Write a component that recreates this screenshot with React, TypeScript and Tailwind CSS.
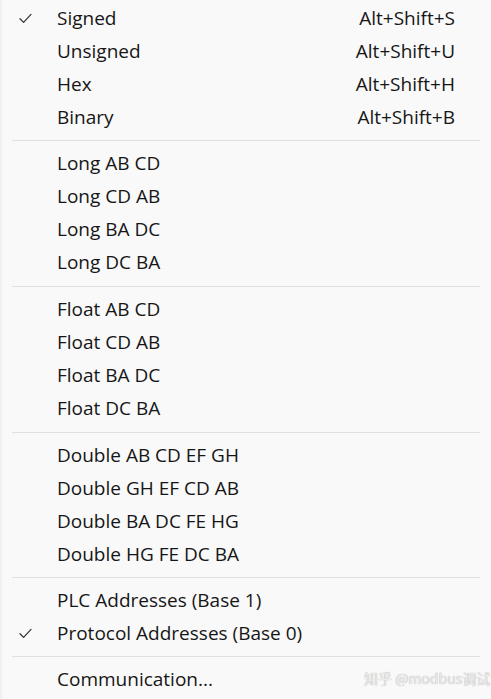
import React from "react";

type Item = { label: string; shortcut?: string; checked?: boolean };

const groups: { items: Item[]; sep?: number }[] = [
  {
    items: [
      { label: "Signed", shortcut: "Alt+Shift+S", checked: true },
      { label: "Unsigned", shortcut: "Alt+Shift+U" },
      { label: "Hex", shortcut: "Alt+Shift+H" },
      { label: "Binary", shortcut: "Alt+Shift+B" },
    ],
    sep: 13,
  },
  {
    items: [
      { label: "Long AB CD" },
      { label: "Long CD AB" },
      { label: "Long BA DC" },
      { label: "Long DC BA" },
    ],
    sep: 14,
  },
  {
    items: [
      { label: "Float AB CD" },
      { label: "Float CD AB" },
      { label: "Float BA DC" },
      { label: "Float DC BA" },
    ],
    sep: 14,
  },
  {
    items: [
      { label: "Double AB CD EF GH" },
      { label: "Double GH EF CD AB" },
      { label: "Double BA DC FE HG" },
      { label: "Double HG FE DC BA" },
    ],
    sep: 13,
  },
  {
    items: [
      { label: "PLC Addresses (Base 1)" },
      { label: "Protocol Addresses (Base 0)", checked: true },
    ],
    sep: 13,
  },
  {
    items: [{ label: "Communication..." }],
  },
];

function Check() {
  return (
    <svg width="13" height="11" viewBox="0 0 13 11" fill="none">
      <path d="M1 5.8 L4.6 9.4 L12 1.4" stroke="#3a3a3a" strokeWidth="1.3" strokeLinecap="round" strokeLinejoin="round" />
    </svg>
  );
}

function Row({ item }: { item: Item }) {
  return (
    <div className="flex h-[33px] items-center">
      <div className="flex w-[55px] shrink-0 items-center pl-[17px]">
        {item.checked ? <Check /> : null}
      </div>
      <div className="flex-1 text-[19px] text-[#161616]">{item.label}</div>
      {item.shortcut ? (
        <div className="pr-[36px] text-[19px] text-[#161616]">{item.shortcut}</div>
      ) : null}
    </div>
  );
}

export default function App() {
  return (
    <div
      className="relative h-[699px] w-[491px] overflow-hidden border-l-[2px] border-[#f0f0f0] bg-[#f9f9f9] pt-[2px]"
      style={{ fontFamily: '"Open Sans", "Noto Sans", sans-serif' }}
    >
      {groups.map((g, gi) => (
        <div key={gi}>
          {g.items.map((it, i) => (
            <Row key={i} item={it} />
          ))}
          {g.sep ? (
            <div
              className={
                g.sep === 14
                  ? "flex h-[14px] items-center px-[10px]"
                  : "flex h-[13px] items-center px-[10px]"
              }
            >
              <div className="h-[1px] w-[468px] bg-[#e0e0e0]" />
            </div>
          ) : null}
        </div>
      ))}
      <div
        className="absolute left-[362px] top-[668px] whitespace-nowrap text-[14px] text-[#ececec]"
        style={{ fontFamily: '"Noto Sans CJK SC", "Noto Sans", sans-serif', textShadow: "0 0 1px #9a9a9a" }}
      >
        知乎 @modbus调试
      </div>
    </div>
  );
}
